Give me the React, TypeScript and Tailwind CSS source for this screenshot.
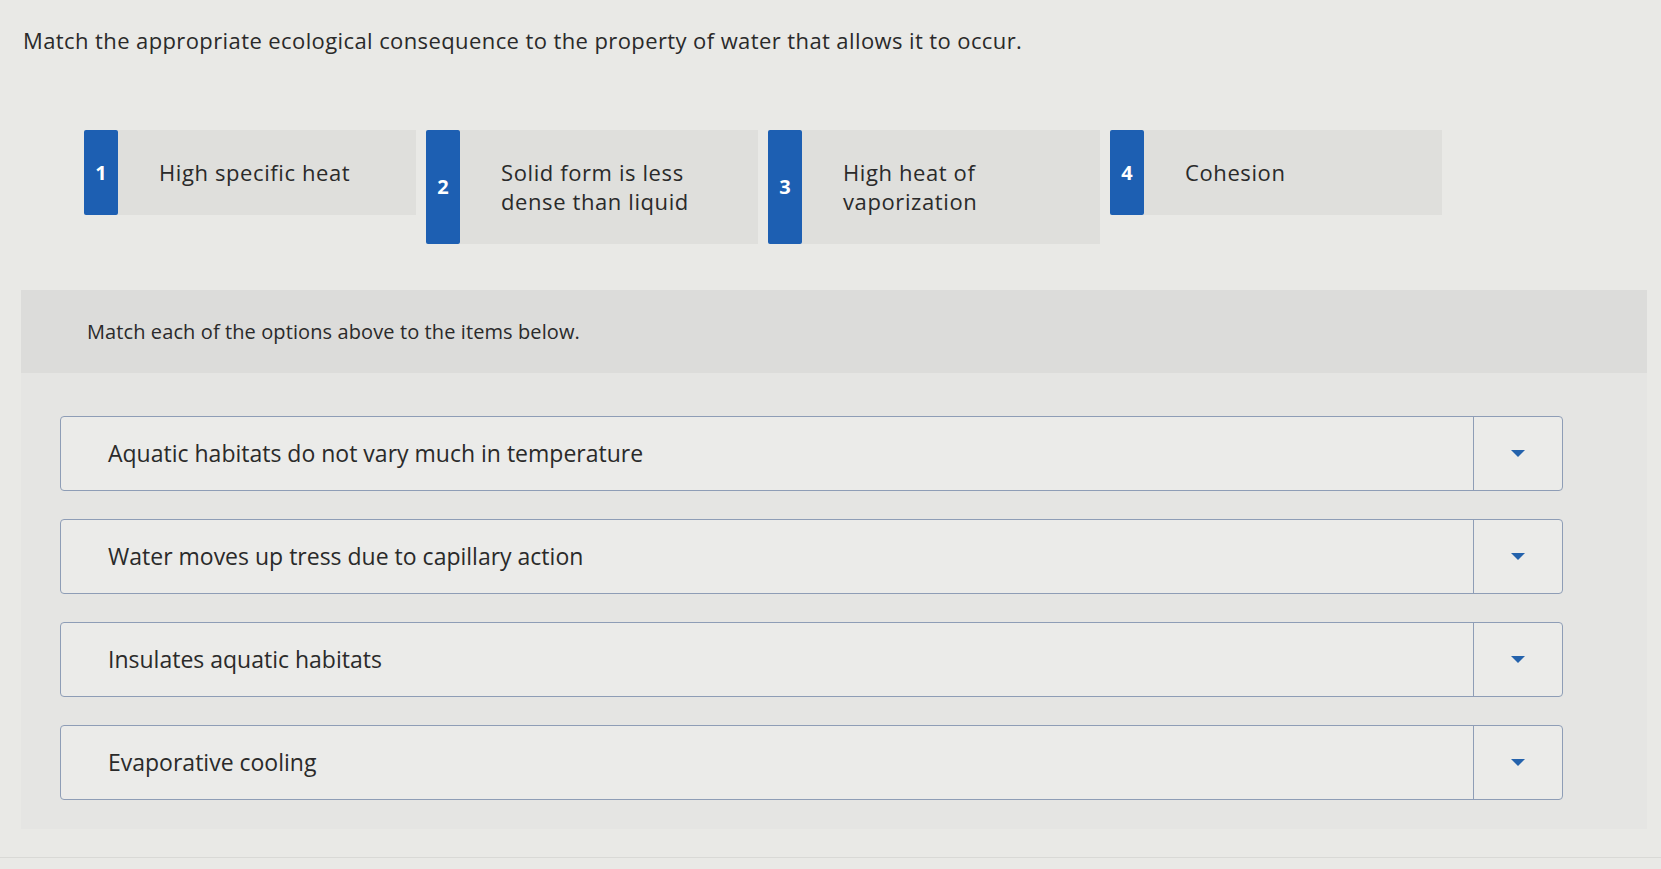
import React from 'react';

const options = [
  { n: 1, label: ['High specific heat'] },
  { n: 2, label: ['Solid form is less', 'dense than liquid'] },
  { n: 3, label: ['High heat of', 'vaporization'] },
  { n: 4, label: ['Cohesion'] },
];

const items = [
  'Aquatic habitats do not vary much in temperature',
  'Water moves up tress due to capillary action',
  'Insulates aquatic habitats',
  'Evaporative cooling',
];

function Caret() {
  return (
    <svg width="16" height="9" viewBox="0 0 16 9">
      <path d="M1 1 L15 1 L8 8 Z" fill="#2462ac" />
    </svg>
  );
}

export default function App() {
  return (
    <div
      className="w-full h-[869px] overflow-hidden bg-[#e9e9e6] text-[#2a2a2a]"
      style={{ fontFamily: '"Open Sans", Lato, sans-serif' }}
    >
      {/* Prompt */}
      <div className="pt-[28px] pl-[23px] text-[22px] leading-[24px] tracking-[0.4px]">
        Match the appropriate ecological consequence to the property of water that allows it to occur.
      </div>

      {/* Options */}
      <div className="flex items-start gap-[10px] mt-[78px] ml-[84px]">
        {options.map((o) => (
          <div key={o.n} className="flex w-[332px]">
            <div className="w-[34px] shrink-0 bg-[#1d5fb2] rounded-[2px] flex items-center justify-center text-white font-bold text-[20px]">
              {o.n}
            </div>
            <div className="flex-1 bg-[#dfdfdc] py-[28px] pl-[41px] text-[22px] leading-[29px] tracking-[0.6px]">
              {o.label.map((l) => (
                <div key={l}>{l}</div>
              ))}
            </div>
          </div>
        ))}
      </div>

      {/* Matching section */}
      <div className="mt-[46px] ml-[21px] w-[1626px] bg-[#e5e5e3]">
        <div className="h-[83px] bg-[#dcdcda] flex items-center pl-[66px] text-[20px] tracking-[0.1px]">
          Match each of the options above to the items below.
        </div>
        <div className="pt-[43px] pb-[29px] pl-[39px] pr-[84px] flex flex-col gap-[28px]">
          {items.map((t) => (
            <div
              key={t}
              className="flex h-[75px] border border-[#8e9db6] rounded-[4px] bg-[#ebebe9]"
            >
              <div className="flex-1 flex items-center pl-[47px] text-[23px]">{t}</div>
              <div className="w-[89px] border-l border-[#8e9db6] flex items-center justify-center">
                <Caret />
              </div>
            </div>
          ))}
        </div>
      </div>

      <div className="mt-[28px] border-t border-[#d9d9d6]" />
    </div>
  );
}
